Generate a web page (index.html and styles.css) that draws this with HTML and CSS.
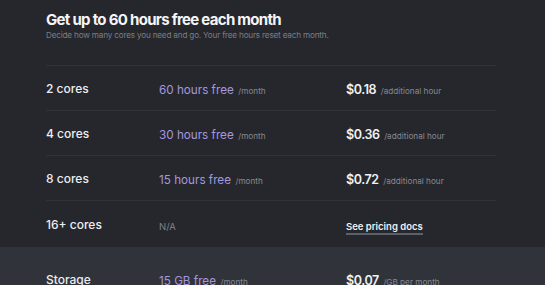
FILE: index.html
```html
<!DOCTYPE html>
<html>
<head>
<meta charset="utf-8">
<link rel="stylesheet" href="styles.css">
</head>
<body>
<section class="plans">
  <div class="wrap">
    <h1 class="title">Get up to 60 hours free each month</h1>
    <p class="sub">Decide how many cores you need and go. Your free hours reset each month.</p>
    <div class="table">
      <div class="row">
        <div class="name">2 cores</div>
        <div class="free"><span class="hl">60 hours free</span> <span class="unit">/month</span></div>
        <div class="price"><span class="amt">$0.18</span> <span class="unit">/additional hour</span></div>
      </div>
      <div class="row">
        <div class="name">4 cores</div>
        <div class="free"><span class="hl">30 hours free</span> <span class="unit">/month</span></div>
        <div class="price"><span class="amt">$0.36</span> <span class="unit">/additional hour</span></div>
      </div>
      <div class="row">
        <div class="name">8 cores</div>
        <div class="free"><span class="hl">15 hours free</span> <span class="unit">/month</span></div>
        <div class="price"><span class="amt">$0.72</span> <span class="unit">/additional hour</span></div>
      </div>
      <div class="row last">
        <div class="name">16+ cores</div>
        <div class="free"><span class="na">N/A</span></div>
        <div class="price"><a class="link" href="#">See pricing docs</a></div>
      </div>
    </div>
  </div>
</section>
<section class="storage">
  <div class="wrap">
    <div class="row srow">
      <div class="name">Storage</div>
      <div class="free"><span class="hl">15 GB free</span> <span class="unit">/month</span></div>
      <div class="price"><span class="amt">$0.07</span> <span class="unit">/GB per month</span></div>
    </div>
  </div>
</section>
</body>
</html>
```
FILE: styles.css
```css
html, body {
  margin: 0;
  padding: 0;
}
body {
  background: #25272d;
  font-family: Inter, "Noto Sans", "Liberation Sans", sans-serif;
  color: #e8e9ec;
  width: 545px;
  height: 285px;
  overflow: hidden;
}
.plans {
  padding-top: 11px;
}
.wrap {
  margin-left: 46px;
  width: 450px;
}
.title {
  margin: 0;
  font-size: 15px;
  line-height: 18px;
  font-weight: 700;
  color: #f4f5f7;
  letter-spacing: -0.7px;
}
.sub {
  margin: 0;
  font-size: 8.2px;
  line-height: 12px;
  color: #7b7e86;
  letter-spacing: -0.2px;
}
.table {
  margin-top: 24px;
}
.row {
  display: grid;
  grid-template-columns: 113px 187px 1fr;
  align-items: center;
  height: 44px;
  border-top: 1px solid #2f3239;
}
.row.last {
  height: 46px;
}
.name {
  font-size: 12px;
  font-weight: 500;
  color: #eceef1;
}
.hl {
  font-size: 11.7px;
  color: #a497df;
}
.unit {
  font-size: 8.2px;
  color: #868991;
}
.amt {
  font-size: 12.5px;
  font-weight: 600;
  color: #f0f1f3;
  letter-spacing: -0.4px;
}
.na {
  font-size: 9.5px;
  color: #7f828a;
}
.link {
  font-size: 9.5px;
  font-weight: 600;
  color: #eef0f3;
  text-decoration: none;
  border-bottom: 2px solid #5c6069;
  padding-bottom: 1px;
}
.storage {
  background: #303339;
  height: 40px;
  padding-top: 12px;
}
.srow {
  border-top: none;
  height: 40px;
}
```
